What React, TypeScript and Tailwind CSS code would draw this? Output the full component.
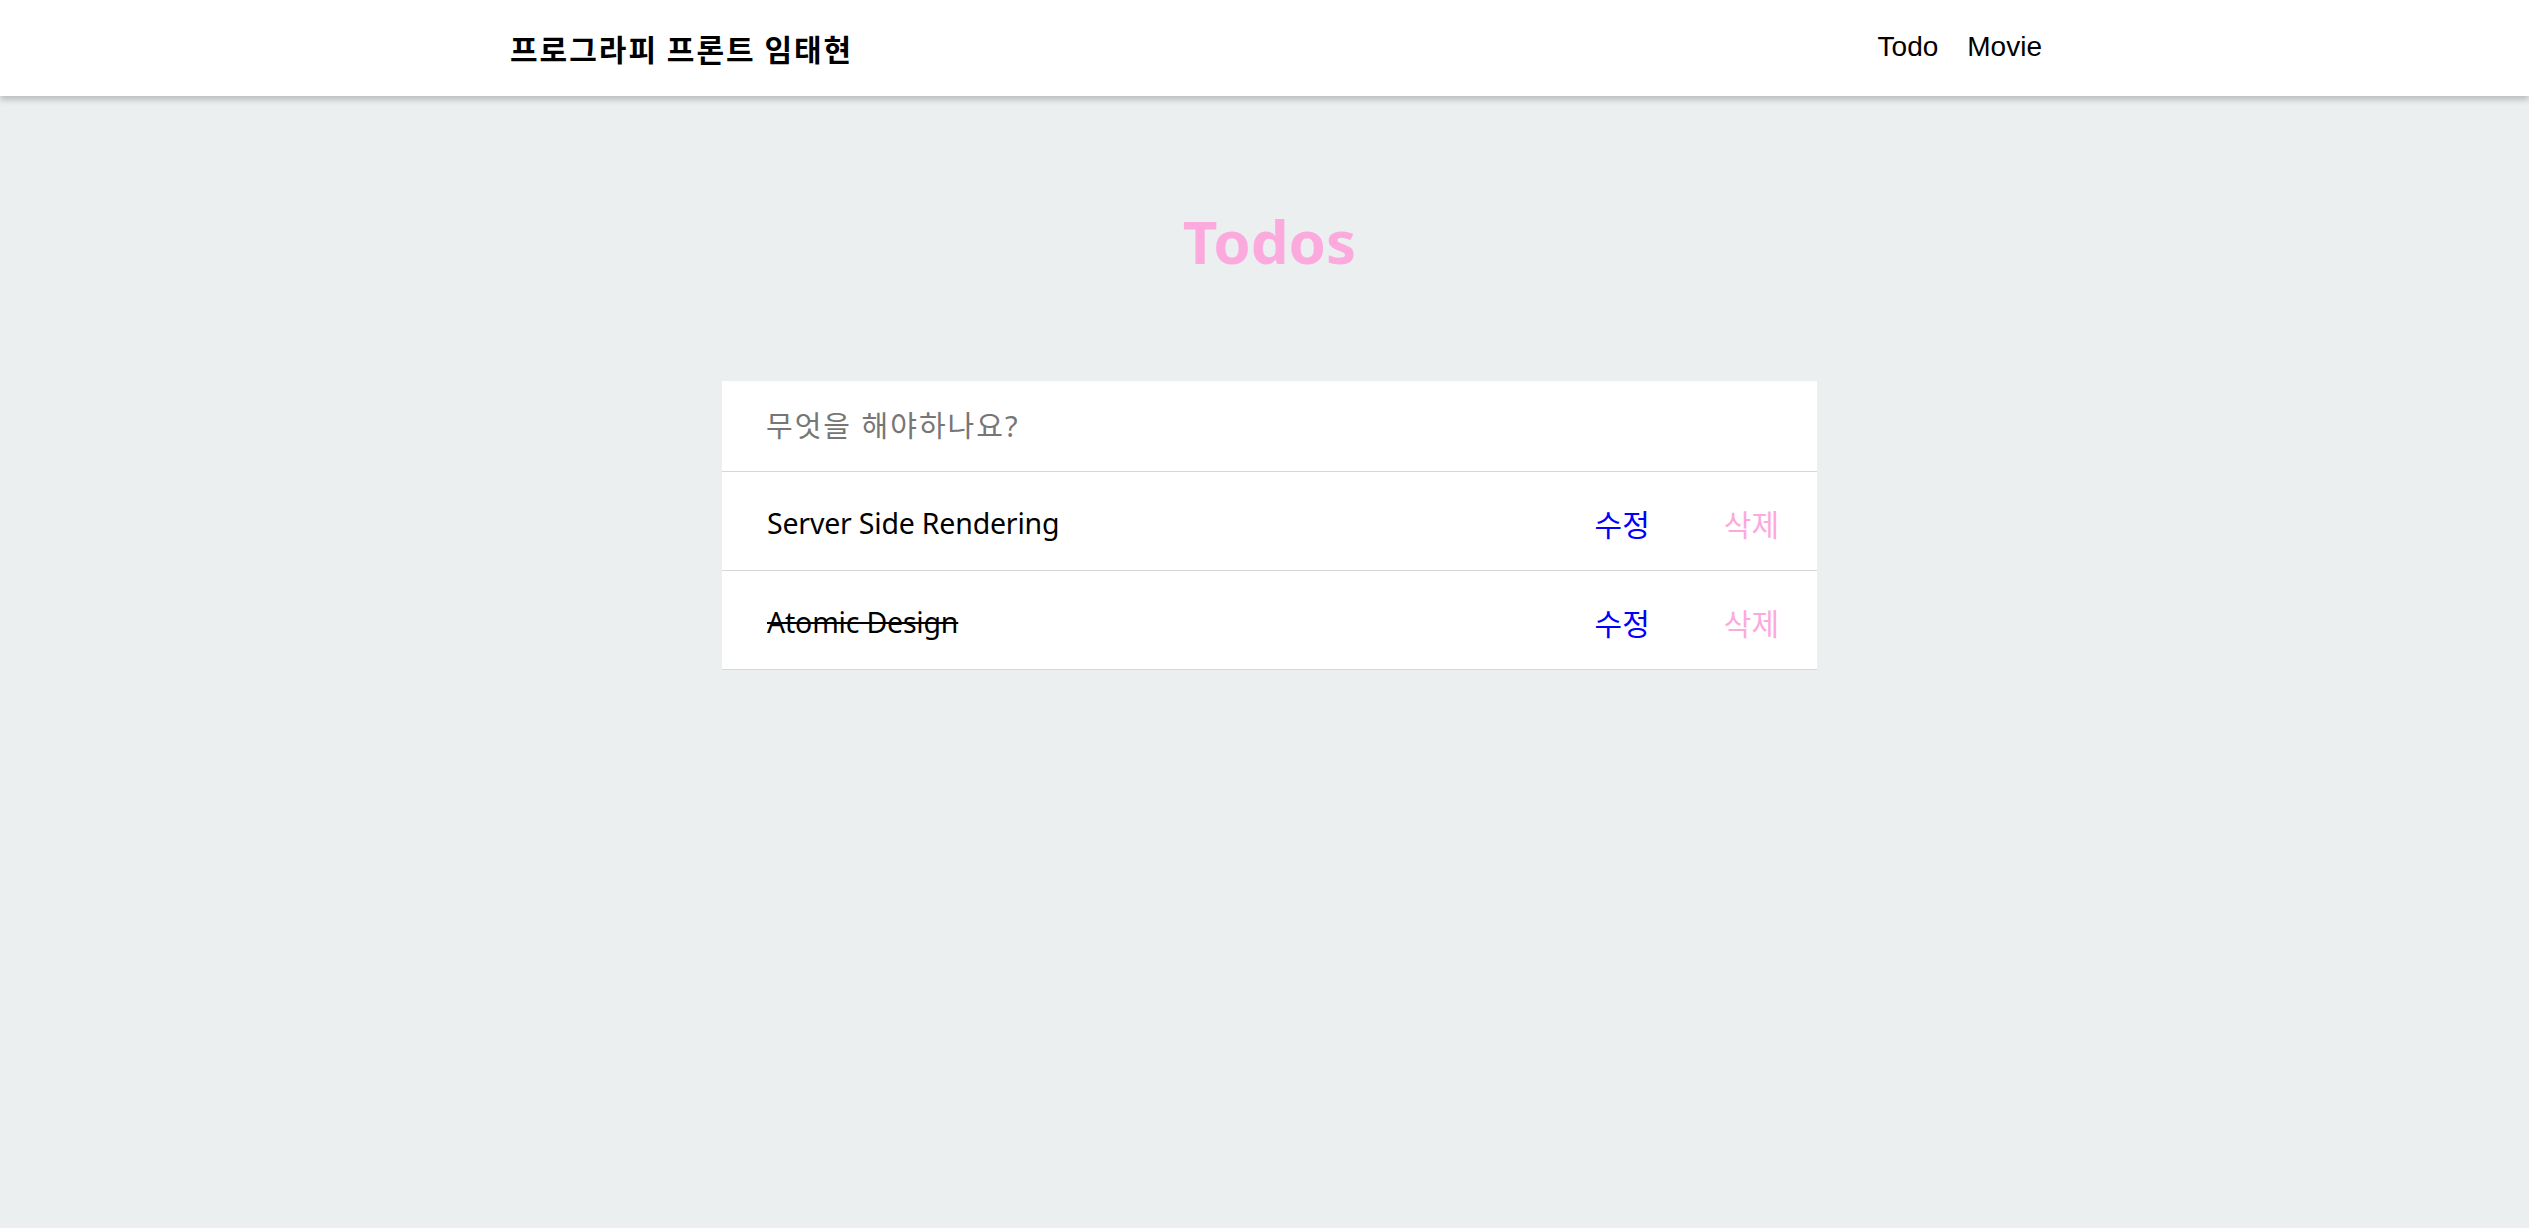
import { useState } from "react";

type Todo = {
  id: number;
  text: string;
  done: boolean;
};

const initialTodos: Todo[] = [
  { id: 1, text: "Server Side Rendering", done: false },
  { id: 2, text: "Atomic Design", done: true },
];

const sans = "font-['Noto_Sans','Noto_Sans_CJK_KR',sans-serif]";

function Header() {
  return (
    <header className="relative z-10 h-[96px] bg-white shadow-[0_4px_6px_rgba(0,0,0,0.2)]">
      <div className="ml-[510px] flex h-full w-[1532px] items-center justify-between">
        <h1 className="font-['Noto_Sans_CJK_KR',sans-serif] text-[30px] font-bold tracking-[2px] text-black">
          프로그라피 프론트 임태현
        </h1>
        <nav className="flex gap-[29px] pb-[2px] font-['Liberation_Sans',Arial,sans-serif] text-[28px] text-black">
          <a href="#todo">Todo</a>
          <a href="#movie">Movie</a>
        </nav>
      </div>
    </header>
  );
}

function TodoRow({ todo }: { todo: Todo }) {
  return (
    <li className="flex h-[99px] items-center justify-between border-b border-[#d6d6d6] pl-[45px] pr-[38px] pt-[4px]">
      <span className={`${sans} text-[28.5px] tracking-[-0.2px] text-black ${todo.done ? "line-through" : ""}`}>
        {todo.text}
      </span>
      <div className="flex gap-[74px] font-['Noto_Sans_CJK_KR',sans-serif] text-[30px]">
        <button type="button" className="text-[#0000ff]">
          수정
        </button>
        <button type="button" className="text-[#fcaadd]">
          삭제
        </button>
      </div>
    </li>
  );
}

export default function App() {
  const [todos] = useState(initialTodos);
  const [draft, setDraft] = useState("");

  return (
    <div className="min-h-screen bg-[#ebeff0]">
      <Header />
      <main className="flex flex-col items-center pl-[10px]">
        <h2 className="mt-[104px] font-['Noto_Sans',sans-serif] text-[60px] font-bold leading-[82px] text-[#fcaadd]">
          Todos
        </h2>
        <section className="mt-[99px] w-[1095px] bg-white">
          <div className="flex h-[91px] items-center border-b border-[#d6d6d6] pl-[44px] pr-[40px]">
            <input
              value={draft}
              onChange={(e) => setDraft(e.target.value)}
              placeholder="무엇을 해야하나요?"
              className={`${sans} w-full bg-transparent text-[29px] tracking-[2px] text-black outline-none placeholder:text-[#767676]`}
            />
          </div>
          <ul>
            {todos.map((todo) => (
              <TodoRow key={todo.id} todo={todo} />
            ))}
          </ul>
        </section>
      </main>
    </div>
  );
}
